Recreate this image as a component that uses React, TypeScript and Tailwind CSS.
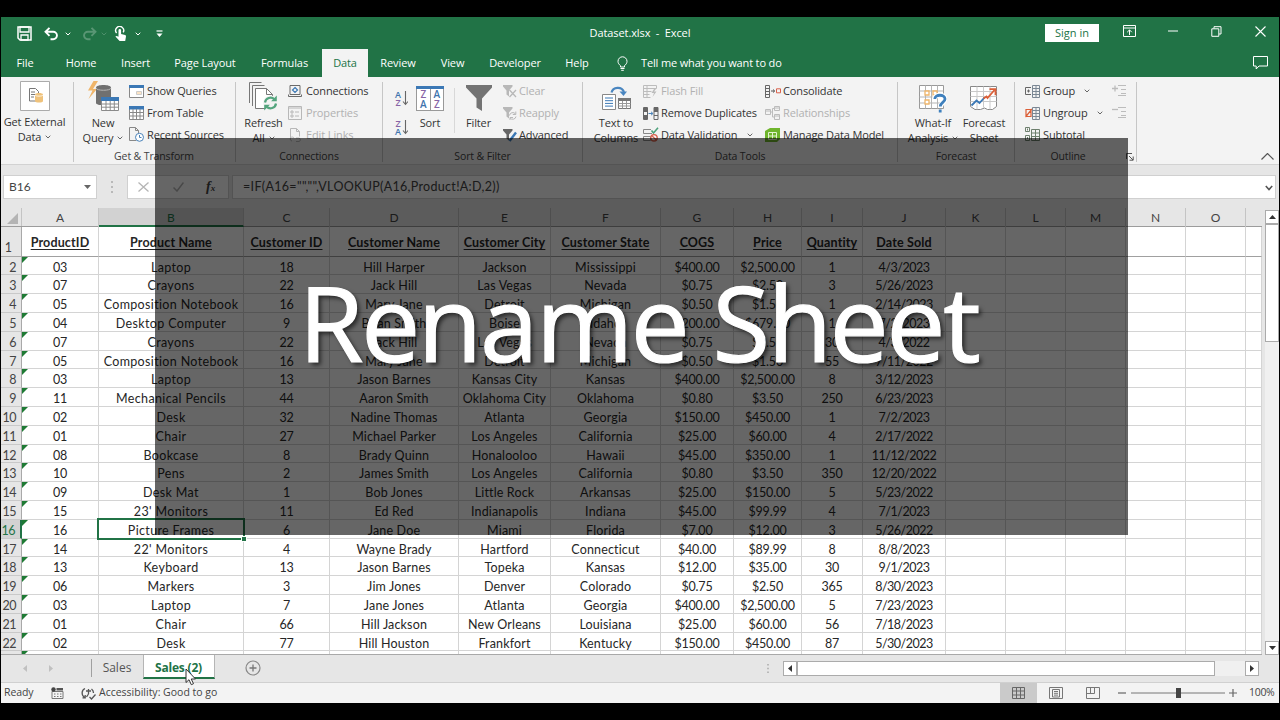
import type { ReactNode } from "react"
import clsx from "clsx"

const COLUMNS = ["A", "B", "C", "D", "E", "F", "G", "H", "I", "J", "K", "L", "M", "N", "O", ""]

const HEADERS = [
  "ProductID",
  "Product Name",
  "Customer ID",
  "Customer Name",
  "Customer City",
  "Customer State",
  "COGS",
  "Price",
  "Quantity",
  "Date Sold",
]

const ROWS = [
  ["03", "Laptop", "18", "Hill Harper", "Jackson", "Mississippi", "$400.00", "$2,500.00", "1", "4/3/2023"],
  ["07", "Crayons", "22", "Jack Hill", "Las Vegas", "Nevada", "$0.75", "$2.50", "3", "5/26/2023"],
  ["05", "Composition Notebook", "16", "Mary Jane", "Detroit", "Michigan", "$0.50", "$1.50", "1", "2/14/2023"],
  ["04", "Desktop Computer", "9", "Brian Smith", "Boise", "Idaho", "$200.00", "$679.00", "1", "7/2/2023"],
  ["07", "Crayons", "22", "Jack Hill", "Las Vegas", "Nevada", "$0.75", "$2.50", "30", "4/3/2022"],
  ["05", "Composition Notebook", "16", "Mary Jane", "Detroit", "Michigan", "$0.50", "$1.50", "55", "7/11/2022"],
  ["03", "Laptop", "13", "Jason Barnes", "Kansas City", "Kansas", "$400.00", "$2,500.00", "8", "3/12/2023"],
  ["11", "Mechanical Pencils", "44", "Aaron Smith", "Oklahoma City", "Oklahoma", "$0.80", "$3.50", "250", "6/23/2023"],
  ["02", "Desk", "32", "Nadine Thomas", "Atlanta", "Georgia", "$150.00", "$450.00", "1", "7/2/2023"],
  ["01", "Chair", "27", "Michael Parker", "Los Angeles", "California", "$25.00", "$60.00", "4", "2/17/2022"],
  ["08", "Bookcase", "8", "Brady Quinn", "Honalooloo", "Hawaii", "$45.00", "$350.00", "1", "11/12/2022"],
  ["10", "Pens", "2", "James Smith", "Los Angeles", "California", "$0.80", "$3.50", "350", "12/20/2022"],
  ["09", "Desk Mat", "1", "Bob Jones", "Little Rock", "Arkansas", "$25.00", "$150.00", "5", "5/23/2022"],
  ["15", "23' Monitors", "11", "Ed Red", "Indianapolis", "Indiana", "$45.00", "$99.99", "4", "7/1/2023"],
  ["16", "Picture Frames", "6", "Jane Doe", "Miami", "Florida", "$7.00", "$12.00", "3", "5/26/2022"],
  ["14", "22' Monitors", "4", "Wayne Brady", "Hartford", "Connecticut", "$40.00", "$89.99", "8", "8/8/2023"],
  ["13", "Keyboard", "13", "Jason Barnes", "Topeka", "Kansas", "$12.00", "$35.00", "30", "9/1/2023"],
  ["06", "Markers", "3", "Jim Jones", "Denver", "Colorado", "$0.75", "$2.50", "365", "8/30/2023"],
  ["03", "Laptop", "7", "Jane Jones", "Atlanta", "Georgia", "$400.00", "$2,500.00", "5", "7/23/2023"],
  ["01", "Chair", "66", "Hill Jackson", "New Orleans", "Louisiana", "$25.00", "$60.00", "56", "7/18/2023"],
  ["02", "Desk", "77", "Hill Houston", "Frankfort", "Kentucky", "$150.00", "$450.00", "87", "5/30/2023"],
]

const GRID =
  "grid grid-rows-[100%] grid-cols-[21px_77px_145px_86px_129px_92px_110px_73px_68px_61px_83px_60px_60px_60px_60px_60px_16px]"

const TABS = [
  { name: "File", width: "w-[48px]" },
  { name: "Home", width: "w-[64px]" },
  { name: "Insert", width: "w-[45px]" },
  { name: "Page Layout", width: "w-[94px]" },
  { name: "Formulas", width: "w-[65px] mr-[5px]" },
  { name: "Data", width: "w-[46px]", active: true },
  { name: "Review", width: "w-[60px]" },
  { name: "View", width: "w-[49px]" },
  { name: "Developer", width: "w-[76px]" },
  { name: "Help", width: "w-[48px]" },
]

type SvgProps = { w: number; h: number; className?: string; children: ReactNode }

function Svg({ w, h, className, children }: SvgProps) {
  return (
    <svg width={w} height={h} viewBox={`0 0 ${w} ${h}`} fill="none" className={clsx("shrink-0", className)}>
      {children}
    </svg>
  )
}

function Caret({ className }: { className?: string }) {
  return (
    <Svg w={6} h={4} className={className}>
      <path d="M0.7 0.7 3 3 5.3 0.7" stroke="currentColor" />
    </Svg>
  )
}

/* ---------- title bar ---------- */

function TitleBar() {
  return (
    <div className="flex h-8 items-center text-white">
      <div className="flex w-[481px] items-center pt-px pl-[16px]">
        <Svg w={15} h={15}>
          <path d="M1 1h13v13H3L1 12z" stroke="#fff" strokeWidth="1.5" />
          <path d="M3 1h9v5H3zM4 9h7v5H4z" stroke="#fff" strokeWidth="1.3" />
        </Svg>
        <Svg w={15} h={14} className="ml-[12px]">
          <path d="M5.5 0.8 1.5 4.8l4 4M1.8 4.8h7.4a3.7 3.7 0 0 1 0 7.5H6.5" stroke="#fff" strokeWidth="1.9" />
        </Svg>
        <Caret className="ml-[6px]" />
        <Svg w={15} h={14} className="ml-[11px] opacity-25">
          <path d="M9.5 0.8l4 4-4 4M13.2 4.8H5.8a3.7 3.7 0 0 0 0 7.5h2.7" stroke="#fff" strokeWidth="1.9" />
        </Svg>
        <Caret className="ml-[4px] opacity-20" />
        <Svg w={13} h={16} className="ml-[7px]">
          <path d="M2.6 7a4 4 0 1 1 6.6-.6" stroke="#fff" strokeWidth="1.4" />
          <path d="M4.5 4.2a1.3 1.3 0 0 1 2.6 0V8l4 1c.7.2 1 .7.9 1.4l-.8 4.6H5.6L1.4 10.6c.5-.9 1.7-.9 3.1.2z" fill="#fff" />
        </Svg>
        <Caret className="ml-[8px]" />
        <Svg w={7} h={8} className="ml-[15px]">
          <path d="M0.5 1h6" stroke="#fff" strokeWidth="1.2" />
          <path d="M0.5 3.5h6L3.5 7z" fill="#fff" />
        </Svg>
      </div>
      <div className="w-[316px] pt-px text-center text-[11px] tracking-[-0.1px] whitespace-pre">Dataset.xlsx  -  Excel</div>
      <div className="ml-[247px] flex h-[18px] w-[54px] items-center justify-center bg-white text-[11px] text-[#217346]">
        Sign in
      </div>
      <div className="ml-[24px] flex items-center pb-1">
        <Svg w={13} h={12}>
          <path d="M0.5 0.5h12v11H0.5zM0.5 3h12" stroke="#fff" />
          <path d="M6.5 10V5M4.2 7.2 6.5 4.9l2.3 2.3" stroke="#fff" />
        </Svg>
        <Svg w={10} h={2} className="ml-[32px]">
          <path d="M0 1h10" stroke="#fff" />
        </Svg>
        <Svg w={11} h={11} className="ml-[33px]">
          <path d="M0.8 2.8h7v7.5h-7z M3 2.5V0.7h7v7.3H8" stroke="#fff" />
        </Svg>
        <Svg w={11} h={11} className="ml-[33px]">
          <path d="M0.5 0.5l10 10M10.5 0.5l-10 10" stroke="#fff" strokeWidth="1.1" />
        </Svg>
      </div>
    </div>
  )
}

function RibbonTabs() {
  return (
    <div className="flex h-[28px] items-center text-[11px] tracking-[-0.1px] text-white">
      {TABS.map((tab) => (
        <div
          key={tab.name}
          className={clsx(
            "flex h-full items-center justify-center whitespace-nowrap",
            tab.width,
            tab.active && "bg-[#f3f3f3] text-[#217346]",
          )}
        >
          {tab.name}
        </div>
      ))}
      <Svg w={11} h={15} className="ml-[16px]">
        <path
          d="M3.5 11V9.6C2 8.6 1 7.1 1 5.3a4.5 4.5 0 0 1 9 0c0 1.8-1 3.3-2.5 4.3V11zM3.5 12.5h4M4.2 14.3h2.6"
          stroke="#fff"
        />
      </Svg>
      <span className="ml-[13px] tracking-[-0.15px] whitespace-nowrap">Tell me what you want to do</span>
      <Svg w={15} h={14} className="mr-[11px] ml-auto">
        <path d="M0.5 0.5h14v9.5H6L3.2 13V10H0.5z" stroke="#fff" />
      </Svg>
    </div>
  )
}

/* ---------- ribbon ---------- */

type GroupProps = { label: string; className: string; launcher?: boolean; labelClass?: string; children?: ReactNode }

function Group({ label, className, launcher, labelClass, children }: GroupProps) {
  return (
    <div className={clsx("flex shrink-0", className)}>
      <div className="flex min-w-0 flex-1 flex-col">
        <div className="flex h-[72px]">{children}</div>
        <div className={clsx("flex h-[14px] items-center justify-center text-[10.5px] text-[#444]", labelClass)}>
          <span>{label}</span>
          {launcher && (
            <Svg w={8} h={8} className="-mr-[48px] ml-[40px]">
              <path d="M0.5 6V0.5H6M3 3l4 4M7.2 3.5v3.7H3.5" stroke="#555" />
            </Svg>
          )}
        </div>
      </div>
      <div className="mt-[4px] h-[80px] w-px bg-[#c6c6c6]" />
    </div>
  )
}

type BigProps = { icon: ReactNode; lines: string[]; caret?: boolean; className: string }

function BigButton({ icon, lines, caret, className }: BigProps) {
  return (
    <div className={clsx("flex shrink-0 flex-col items-center whitespace-nowrap", className)}>
      <div className="flex h-[37px] items-center">{icon}</div>
      {lines.map((line, i) => (
        <div key={line} className="flex h-[15px] items-center leading-[15px]">
          {line}
          {caret && i === lines.length - 1 && <Caret className="ml-[4px] text-[#666]" />}
        </div>
      ))}
    </div>
  )
}

type SmallProps = { icon: ReactNode; label: string; disabled?: boolean; caret?: string }

function SmallButton({ icon, label, disabled, caret }: SmallProps) {
  return (
    <div className={clsx("flex h-[21.7px] items-center whitespace-nowrap", disabled && "text-[#b1b1b1]")}>
      <span className="flex w-[18px] shrink-0 items-center">{icon}</span>
      {label}
      {caret && <Caret className={clsx("text-[#666]", caret)} />}
    </div>
  )
}

function ExternalDataIcon() {
  return (
    <Svg w={30} h={30}>
      <path d="M0.5 0.5h29v29h-29z" fill="#fff" stroke="#ababab" />
      <path d="M9.5 7.5h6l3 3V20h-9z" stroke="#777" />
      <path d="M11 11h4M11 13.5h4M11 16h3" stroke="#777" />
      <path d="M15 13.5c0-2 8-2 8 0v6.5c0 2-8 2-8 0z" fill="#efc27b" />
      <path d="M15 14c0 1.5 8 1.5 8 0" stroke="#fff" strokeWidth=".8" />
    </Svg>
  )
}

function NewQueryIcon() {
  return (
    <Svg w={31} h={32}>
      <path d="M5.5 0 0 9.5h4.5L0.5 18 9 8H5L10 0z" fill="#efb56a" />
      <path d="M8 6.5c0-3.5 15-3.5 15 0V22c0 3-15 3-15 0z" fill="#707070" />
      <path d="M8 7c0 3 15 3 15 0" stroke="#b5b5b5" />
      <path d="M13.5 16.5h17v13h-17z" fill="#fff" stroke="#8a8a8a" />
      <path d="M13 16h18v4H13z" fill="#3b78b5" />
      <path d="M13.5 23h17M13.5 26.2h17M18 20v9.5M22.2 20v9.5M26.3 20v9.5" stroke="#8a8a8a" />
    </Svg>
  )
}

function RefreshIcon() {
  return (
    <Svg w={29} h={29}>
      <path d="M0.5 21V0.5h12M3.5 24V3.5h12" stroke="#777" />
      <path d="M6.5 6.5h11l6 6v14h-17z" fill="#fff" stroke="#777" />
      <path d="M17.5 6.5v6h6" stroke="#777" />
      <circle cx="21.5" cy="21" r="7.5" fill="#f3f3f3" />
      <path d="M16 20.5a5.5 5.5 0 0 1 9.5-3M27 21.5a5.5 5.5 0 0 1-9.5 3" stroke="#54a57e" strokeWidth="2.2" />
      <path d="M27.8 13.5v5.7h-5.7zM15.2 28.5v-5.7h5.7z" fill="#54a57e" />
    </Svg>
  )
}

function WindowIcon() {
  return (
    <Svg w={15} h={13}>
      <path d="M0.5 0.5h14v12H0.5z" fill="#fff" stroke="#888" />
      <path d="M0 0h15v3H0z" fill="#3b78b5" />
      <path d="M7.5 6.5h5v3h-5z" fill="#fbe3c4" stroke="#ccc" />
    </Svg>
  )
}

function TableIcon() {
  return (
    <Svg w={15} h={14}>
      <path d="M0.5 0.5h14v13H0.5z" fill="#fff" stroke="#888" />
      <path d="M0 0h15v3.5H0z" fill="#3b78b5" />
      <path d="M0.5 6.5h14M0.5 10h14M4 3v10.5M7.5 3v10.5M11 3v10.5" stroke="#888" />
    </Svg>
  )
}

function RecentIcon() {
  return (
    <Svg w={15} h={15}>
      <path d="M7 13.5H0.5v-13h6l3 3V6M6.5 0.5v3h3" stroke="#888" />
      <circle cx="10.5" cy="10.3" r="4" fill="#fff" stroke="#4a82b8" />
      <path d="M10.5 8v2.5h2" stroke="#4a82b8" />
    </Svg>
  )
}

function ConnectionsIcon() {
  return (
    <Svg w={14} h={13}>
      <path d="M2 0.5h10v9H2zM0.5 9.5v2h13v-2" stroke="#6a6a6a" />
      <path d="M7 2.5 9.5 5 7 7.5 4.5 5z" stroke="#3b78b5" strokeWidth="1.2" />
    </Svg>
  )
}

function PropertiesIcon() {
  return (
    <Svg w={14} h={14}>
      <path d="M0.5 0.5h13v13H0.5zM0.5 2h13" stroke="#b8b8b8" />
      <path d="M3 5h2v2H3zM3 9h2v2H3zM7 6h4M7 10h4" stroke="#b8b8b8" />
    </Svg>
  )
}

function EditLinksIcon() {
  return (
    <Svg w={14} h={14}>
      <path d="M2.5 11.5v-11h6l3 3v5M8.5 0.5v3h3M4 13a2 2 0 1 1 2-3M8 10h3a1.8 1.8 0 0 1 0 3.5H8" stroke="#b8b8b8" />
    </Svg>
  )
}

/* letter pair with a down arrow, used by the two quick sort buttons */
function SortLetters({ top, bottom }: { top: string; bottom: string }) {
  return (
    <div className="flex h-[29px] items-center">
      <div className="flex w-[8px] flex-col text-center text-[9px] leading-[7.5px] font-semibold">
        <span className={top === "A" ? "text-[#3f74ad]" : "text-[#8764a6]"}>{top}</span>
        <span className={bottom === "A" ? "text-[#3f74ad]" : "text-[#8764a6]"}>{bottom}</span>
      </div>
      <Svg w={6} h={15}>
        <path d="M3.5 0v13M1 10.5l2.5 3 2.5-3" stroke="#666" strokeWidth="1.1" />
      </Svg>
    </div>
  )
}

function SortIcon() {
  return (
    <div className="mt-[4px] flex h-[25px] w-[28px] flex-col border border-[#999] bg-white">
      <div className="-mx-px -mt-px h-[3px] shrink-0 bg-[#3b78b5]" />
      <div className="flex flex-1 divide-x divide-[#999] text-center text-[10px] leading-[10px] font-semibold">
        <div className="flex flex-1 flex-col">
          <span className="text-[#8764a6]">Z</span>
          <span className="text-[#3f74ad]">A</span>
        </div>
        <div className="flex flex-1 flex-col">
          <span className="text-[#3f74ad]">A</span>
          <span className="text-[#8764a6]">Z</span>
        </div>
      </div>
    </div>
  )
}

function FilterIcon() {
  return (
    <Svg w={26} h={26} className="mt-[3px]">
      <path d="M0 0h26v2.5L16 13.5V26l-5.5-3.5v-9L0 2.5z" fill="#737373" />
    </Svg>
  )
}

function SmallFilterIcon({ color, kind }: { color: string; kind: "clear" | "reapply" | "advanced" }) {
  return (
    <Svg w={14} h={14}>
      <path d="M0 1h9.5v1.5L6 6.5v6l-2.5-2v-4L0 2.5z" fill={color} />
      {kind === "clear" && <path d="M6.5 6l6.5 7M13 6l-6.5 7" stroke={color} strokeWidth="1.3" />}
      {kind === "reapply" && (
        <path d="M6.5 9.5a3.3 3.3 0 0 1 6-1.5M12.8 5.5V8.5h-3M13 10.5a3.3 3.3 0 0 1-6 1.3M7 14v-2.5h3" stroke={color} />
      )}
      {kind === "advanced" && <path d="M6.5 13 13 4.5" stroke="#3b78b5" strokeWidth="2.4" />}
    </Svg>
  )
}

function TextToColumnsIcon() {
  return (
    <Svg w={29} h={25} className="mt-[3px]">
      <path d="M0.5 8.5h13v15H0.5z" fill="#fff" stroke="#888" />
      <path d="M3 12h8M3 14.7h8M3 17.4h8M3 20.1h8" stroke="#3b78b5" />
      <path d="M16.5 12.5h12v10h-12z" fill="#fff" stroke="#777" />
      <path d="M16 12h13v3H16z" fill="#777" />
      <path d="M16.5 17.5h12M16.5 20h12M20.5 15v7.5M24.5 15v7.5" stroke="#999" />
      <path d="M9.5 6.5C11 1 19.5 0 22 6" stroke="#4a86c0" strokeWidth="2.2" />
      <path d="M17.5 5.5h7.5L21.5 10z" fill="#4a86c0" />
    </Svg>
  )
}

function FlashFillIcon() {
  return (
    <Svg w={15} h={13}>
      <path d="M0.5 0.5h13v3M0.5 0.5v12h7M0.5 3.5h13M0.5 6.5h8M0.5 9.5h6M4 0.5v12" stroke="#bcbcbc" />
      <path d="M11 4 8.5 8H11l-1.5 4 4-5.5H11L13 4z" fill="#bcbcbc" />
    </Svg>
  )
}

function DuplicatesIcon() {
  return (
    <Svg w={16} h={13}>
      <path d="M0.5 0.5h4v12h-4zM11 0.5h4v12h-4zM0.5 4.5h4M0.5 8.5h4M11 4.5h4M11 8.5h4" stroke="#666" />
      <path d="M1 1h3.5v3.5H1zM11 1h4v3.5h-4zM1 9h3.5v3H1z" fill="#666" />
      <path d="M5.5 6.5h4M8 4.8l2 1.7-2 1.7" stroke="#4a82b8" />
    </Svg>
  )
}

function ValidationIcon() {
  return (
    <Svg w={16} h={15}>
      <path d="M8 2.5H0.5v4H9M0.5 9.5h7v4h-7z" stroke="#888" />
      <path d="M8.5 3.5l2 2.5L15 0.8" stroke="#4ea27c" strokeWidth="1.6" />
      <circle cx="11" cy="10.8" r="3.2" stroke="#d9614c" strokeWidth="1.4" />
      <path d="M8.8 8.6l4.4 4.4" stroke="#d9614c" strokeWidth="1.3" />
    </Svg>
  )
}

function ConsolidateIcon() {
  return (
    <Svg w={16} h={13}>
      <path d="M0.5 0.5h4v12h-4zM0.5 3.5h4M0.5 6.5h4M0.5 9.5h4" stroke="#666" />
      <path d="M6 6h3.5M8 4.5 9.7 6 8 7.5" stroke="#555" />
      <path d="M11.5 3.8h4v4h-4z" stroke="#d9614c" />
    </Svg>
  )
}

function RelationshipsIcon() {
  return (
    <Svg w={16} h={14}>
      <path d="M0.5 3.5h5v5h-5zM9.5 0.5h5v4h-5zM9.5 8.5h5v5h-5zM0.5 5h5M9.5 2h5M9.5 10h5M5.5 6h2V2.5h2M7.5 6v5h2" stroke="#bcbcbc" />
    </Svg>
  )
}

function DataModelIcon() {
  return (
    <Svg w={15} h={14}>
      <path d="M0 3 5 0h10v11l-3 3H0z" fill="#6fb52c" />
      <path d="M3.5 4.5h8v7h-8zM3.5 8h8M7.5 4.5v7" stroke="#e3f3d0" />
    </Svg>
  )
}

function WhatIfIcon() {
  return (
    <Svg w={28} h={28} className="mt-[5px]">
      <path d="M0.5 0.5h24v23H0.5z" fill="#fff" stroke="#999" />
      <path d="M0.5 6h24M0.5 12h24M0.5 18h24M6.5 0.5v23M12.5 0.5v23M18.5 0.5v23" stroke="#b5b5b5" />
      <path d="M6 6h4v4H6zM6 15h4v4H6zM14 6h4v4h-4z" stroke="#efb56a" strokeWidth="1.3" fill="#fff" />
      <path d="M15.5 14c0-5 10.5-5 10.5 0 0 3.5-4.5 3.5-4.5 8" stroke="#fff" strokeWidth="5" />
      <path d="M15.8 14c0-5 10.2-5 10.2 0 0 3.5-4.7 3.5-4.7 7.5M21.2 24.5v3" stroke="#3f80bd" strokeWidth="2.8" />
    </Svg>
  )
}

function ForecastIcon() {
  return (
    <Svg w={28} h={25} className="mt-[3px]">
      <path d="M0.5 0.5h26v20l-4 3h-5l-3-1.5-4 1.5H5l-4.5-3z" fill="#fff" stroke="#888" />
      <path d="M0.5 5.5h26M0.5 10.5h26M0.5 15.5h26M7 0.5v23M13.5 0.5v21M20 0.5v23" stroke="#c9c9c9" />
      <path d="M1.5 19.5l5-5 3 2.5 5-5.5" stroke="#3b78b5" strokeWidth="1.8" />
      <path d="M13.5 12.5l3-2 1 1.5 7-8" stroke="#dc5f38" strokeWidth="1.8" />
      <path d="M19.5 3.2h6v6" stroke="#dc5f38" strokeWidth="1.8" />
    </Svg>
  )
}

function OutlineIcon({ color }: { color: string }) {
  return (
    <Svg w={15} h={13}>
      <path d="M6 2.5H0.5v7H6M2 6h3M3.5 4.5v3" stroke={color} />
      <path d="M7.5 0.5h7v12h-7zM7.5 3.5h7M7.5 6.5h7M7.5 9.5h7M11 0.5v12" stroke="#7b8794" />
    </Svg>
  )
}

function UngroupIcon() {
  return (
    <Svg w={15} h={13}>
      <path d="M1 2.5h5v7H1zM0.5 10 7 2" stroke="#dc5f38" strokeWidth="1.2" />
      <path d="M7.5 0.5h7v12h-7zM7.5 3.5h7M7.5 6.5h7M7.5 9.5h7M11 0.5v12" stroke="#7b8794" />
    </Svg>
  )
}

function SubtotalIcon() {
  return (
    <Svg w={15} h={15}>
      <path d="M0.5 0.5h4v4h-4zM0.5 8.5h4v5h-4zM6.5 2.5h8v11h-8zM6.5 6h8M6.5 9.5h8M10.5 2.5v11M2.5 1.5v2M2.5 10v2" stroke="#6d7f6d" />
    </Svg>
  )
}

function DetailIcon({ plus }: { plus?: boolean }) {
  return (
    <Svg w={14} h={12}>
      <path d="M6 1.5h8M9 5.5h5M9 9.5h5M6 11.5h8" stroke="#bcbcbc" />
      <path d={plus ? "M0 4.5h6M3 1.5v6" : "M0 3.5h6"} stroke="#bcbcbc" strokeWidth="1.3" />
    </Svg>
  )
}

function Ribbon() {
  return (
    <div className="flex h-[88px] border-b border-[#d2d2d2] bg-[#f3f3f3] pt-px text-[11px] tracking-[-0.12px] text-[#333]">
      <Group label="" className="w-[73px]">
        <BigButton className="-mt-px w-[67px]" icon={<ExternalDataIcon />} lines={["Get External", "Data"]} caret />
      </Group>

      <Group label="Get & Transform" className="w-[162px]" labelClass="pr-px">
        <BigButton className="ml-[3px] w-[52px]" icon={<NewQueryIcon />} lines={["New", "Query"]} caret />
        <div className="pt-[2.6px]">
          <SmallButton icon={<WindowIcon />} label="Show Queries" />
          <SmallButton icon={<TableIcon />} label="From Table" />
          <SmallButton icon={<RecentIcon />} label="Recent Sources" />
        </div>
      </Group>

      <Group label="Connections" className="w-[147px]">
        <BigButton className="ml-[3px] w-[49px]" icon={<RefreshIcon />} lines={["Refresh", "All"]} caret />
        <div className="pt-[2.6px]">
          <SmallButton icon={<ConnectionsIcon />} label="Connections" />
          <SmallButton icon={<PropertiesIcon />} label="Properties" disabled />
          <SmallButton icon={<EditLinksIcon />} label="Edit Links" disabled />
        </div>
      </Group>

      <Group label="Sort & Filter" className="w-[200px]">
        <div className="ml-[11px] w-[16px] pt-[6px]">
          <SortLetters top="A" bottom="Z" />
          <SortLetters top="Z" bottom="A" />
        </div>
        <BigButton className="ml-px w-[38px]" icon={<SortIcon />} lines={["Sort"]} />
        <div className="mt-[10px] ml-[5px] h-[45px] w-px bg-[#d8d8d8]" />
        <BigButton className="mr-px w-[47px]" icon={<FilterIcon />} lines={["Filter"]} />
        <div className="pt-[2.6px] [&_span]:w-[16px]">
          <SmallButton icon={<SmallFilterIcon color="#b8b8b8" kind="clear" />} label="Clear" disabled />
          <SmallButton icon={<SmallFilterIcon color="#b8b8b8" kind="reapply" />} label="Reapply" disabled />
          <SmallButton icon={<SmallFilterIcon color="#666" kind="advanced" />} label="Advanced" />
        </div>
      </Group>

      <Group label="Data Tools" className="w-[315px]">
        <BigButton className="ml-[6px] w-[54px]" icon={<TextToColumnsIcon />} lines={["Text to", "Columns"]} />
        <div className="w-[122px] pt-[2.6px]">
          <SmallButton icon={<FlashFillIcon />} label="Flash Fill" disabled />
          <SmallButton icon={<DuplicatesIcon />} label="Remove Duplicates" />
          <SmallButton icon={<ValidationIcon />} label="Data Validation" caret="ml-[10px]" />
        </div>
        <div className="pt-[2.6px]">
          <SmallButton icon={<ConsolidateIcon />} label="Consolidate" />
          <SmallButton icon={<RelationshipsIcon />} label="Relationships" disabled />
          <SmallButton icon={<DataModelIcon />} label="Manage Data Model" />
        </div>
      </Group>

      <Group label="Forecast" className="w-[117px]">
        <BigButton className="ml-[8px] w-[54px]" icon={<WhatIfIcon />} lines={["What-If", "Analysis"]} caret />
        <BigButton className="ml-px w-[46px]" icon={<ForecastIcon />} lines={["Forecast", "Sheet"]} />
      </Group>

      <Group label="Outline" className="w-[122px]" labelClass="pr-[15px]" launcher>
        <div className="ml-[10px] w-[87px] pt-[2.6px]">
          <SmallButton icon={<OutlineIcon color="#666" />} label="Group" caret="ml-[9px]" />
          <SmallButton icon={<UngroupIcon />} label="Ungroup" caret="ml-[9px]" />
          <SmallButton icon={<SubtotalIcon />} label="Subtotal" />
        </div>
        <div className="flex flex-col gap-[10px] pt-[6px]">
          <DetailIcon plus />
          <DetailIcon />
        </div>
      </Group>

      <div className="flex flex-1 items-end justify-end pr-[5px] pb-[4px]">
        <Svg w={13} h={7}>
          <path d="M0.5 6.5l6-6 6 6" stroke="#555" strokeWidth="1.2" />
        </Svg>
      </div>
    </div>
  )
}

/* ---------- formula bar ---------- */

function FormulaBar() {
  return (
    <div className="flex h-[43px] items-start bg-[#e6e6e6] pt-[10px] text-[#444]">
      <div className="ml-[2px] flex h-[24px] w-[94px] items-center justify-between border border-[#d0d0d0] bg-white pr-[5px] pl-[5px] font-['Lato'] text-[12px]">
        B16
        <Svg w={7} h={4}>
          <path d="M0 0h7L3.5 4z" fill="#666" />
        </Svg>
      </div>
      <Svg w={2} h={12} className="mt-[6px] ml-[14px]">
        <path d="M1 0v2M1 5v2M1 10v2" stroke="#aaa" strokeWidth="1.5" />
      </Svg>
      <div className="ml-[14px] flex h-[24px] w-[102px] items-center border border-[#d0d0d0] bg-white pl-[10px]">
        <Svg w={11} h={10}>
          <path d="M0.5 0.5l10 9M10.5 0.5l-10 9" stroke="#b5b5b5" strokeWidth="1.3" />
        </Svg>
        <Svg w={11} h={10} className="ml-[24px]">
          <path d="M0.5 5.5l3.5 3.5 6.5-8.5" stroke="#b5b5b5" strokeWidth="1.5" />
        </Svg>
        <span className="ml-[22px] font-['Liberation_Serif'] text-[14px] leading-none font-bold italic">
          f<span className="text-[9px]">x</span>
        </span>
      </div>
      <div className="ml-[3px] flex h-[24px] w-[1044px] items-center justify-between border border-[#d0d0d0] bg-white pt-px pr-[2px] pl-[10px] font-['Lato'] text-[12.5px] tracking-[0.32px]">
        {'=IF(A16="","",VLOOKUP(A16,Product!A:D,2))'}
        <Svg w={8} h={6}>
          <path d="M0.8 1 4 4.5 7.2 1" stroke="#555" strokeWidth="1.6" />
        </Svg>
      </div>
    </div>
  )
}

/* ---------- sheet ---------- */

function ColumnHeads() {
  return (
    <div className={clsx(GRID, "h-[19px] shrink-0 border-b border-[#9c9c9c] bg-[#e6e6e6] leading-[19px] text-[#444]")}>
      <div className="flex items-end justify-end border-r border-[#c4c4c4] pr-[3px] pb-[2px]">
        <Svg w={11} h={11}>
          <path d="M11 0v11H0z" fill="#b4b4b4" />
        </Svg>
      </div>
      {COLUMNS.map((col, i) => (
        <div
          key={i}
          className={clsx(
            "h-[19px] text-center text-[12px]",
            i < 15 && "border-r border-[#c4c4c4]",
            col === "B" && "border-b-2 border-b-[#217346] bg-[#d2d2d2] text-[#217346]",
          )}
        >
          {col}
        </div>
      ))}
    </div>
  )
}

// names run a little wide, money and dates a little tight
function cellText(i: number) {
  if (i === 9) return "tracking-[-0.5px]"
  if (i === 0 || i === 2 || i > 5) return "tracking-[-0.2px]"
  if (i === 1) return "tracking-[0.35px]"
  return "tracking-[0.15px]"
}

function SheetRow({ number, cells }: { number: number; cells: string[] }) {
  const selected = number === 16
  return (
    <div className={clsx(GRID, "h-[18.8px] shrink-0 leading-[21.5px]")}>
      <div
        className={clsx(
          "border-r border-b border-b-[#c9c9c9] pr-[5px] text-right tracking-[-0.5px]",
          selected ? "border-r-2 border-r-[#217346] bg-[#d2d2d2] text-[#217346]" : "border-r-[#a9a9a9] bg-[#e6e6e6] text-[#444]",
        )}
      >
        {number < 23 && number}
      </div>
      {COLUMNS.map((col, i) => (
        <div
          key={i}
          className={clsx("relative border-r border-b border-[#d4d4d4] text-center whitespace-nowrap", cellText(i))}
        >
          {i === 0 && (
            <Svg w={6} h={6} className="absolute top-0 left-0">
              <path d="M0 0h6L0 6z" fill="#1e7a34" />
            </Svg>
          )}
          {cells[i]}
          {selected && col === "B" && (
            <div className="absolute -top-[2px] -right-[2px] -bottom-[2px] -left-[2px] z-10 border-2 border-[#217346]">
              <div className="absolute -right-[4px] -bottom-[4px] h-[6px] w-[6px] border border-white bg-[#217346]" />
            </div>
          )}
        </div>
      ))}
    </div>
  )
}

function Sheet() {
  return (
    <div className="flex h-[447px] bg-[#e6e6e6]">
      <div className="flex h-[447px] w-[1261px] flex-col overflow-hidden border-b border-[#a9a9a9] bg-white font-['Lato'] text-[12.5px] text-[#262626]">
        <ColumnHeads />
        <div className={clsx(GRID, "h-[29.7px] shrink-0")}>
          <div className="border-r border-b border-[#a9a9a9] bg-[#e6e6e6] pt-[12px] pr-[9px] text-right leading-[18px] text-[#444]">
            1
          </div>
          {COLUMNS.map((_, i) => (
            <div
              key={i}
              className="border-r border-b border-r-[#d4d4d4] border-b-[#a0a0a0] text-center leading-[31px] font-bold tracking-[0.15px] whitespace-nowrap underline underline-offset-2"
            >
              {HEADERS[i]}
            </div>
          ))}
        </div>
        {ROWS.map((cells, i) => (
          <SheetRow key={i} number={i + 2} cells={cells} />
        ))}
        <SheetRow number={23} cells={[]} />
      </div>
      <div className="ml-[3px] flex w-[14px] flex-col pt-[2px]">
        <div className="flex h-[14px] items-center justify-center border border-[#ababab] bg-white">
          <Svg w={7} h={4}>
            <path d="M0 4h7L3.5 0z" fill="#333" />
          </Svg>
        </div>
        <div className="h-[118px] border border-[#ababab] bg-white" />
        <div className="flex-1 bg-[#f0f0f0]" />
        <div className="flex h-[14px] items-center justify-center border border-[#ababab] bg-white">
          <Svg w={7} h={4}>
            <path d="M0 0h7L3.5 4z" fill="#333" />
          </Svg>
        </div>
      </div>
    </div>
  )
}

/* ---------- bottom bars ---------- */

function SheetTabs() {
  return (
    <div className="flex h-[27px] items-start bg-[#e6e6e6] text-[12px]">
      <Svg w={4} h={7} className="mt-[10px] ml-[22px]">
        <path d="M4 0v7L0 3.5z" fill="#c0c0c0" />
      </Svg>
      <Svg w={4} h={7} className="mt-[10px] ml-[22px]">
        <path d="M0 0v7l4-3.5z" fill="#c0c0c0" />
      </Svg>
      <div className="mt-[4px] ml-[38px] h-[18px] w-px bg-[#a0a0a0]" />
      <div className="flex h-[25px] w-[51px] items-center justify-center pr-px text-[#555]">Sales</div>
      <div className="flex h-[24px] w-[72px] items-center justify-center border-x border-b-2 border-x-[#b5b5b5] border-b-[#217346] bg-white pt-[3px] pr-px font-bold tracking-[-0.2px] text-[#217346]">
        Sales (2)
      </div>
      <Svg w={16} h={16} className="mt-[5px] ml-[30px]">
        <circle cx="8" cy="8" r="7" stroke="#888" strokeWidth="1.2" />
        <path d="M8 4.5v7M4.5 8h7" stroke="#777" strokeWidth="1.3" />
      </Svg>
      <Svg w={2} h={9} className="mt-[9px] ml-auto">
        <path d="M1 0v1.5M1 3.7v1.5M1 7.4v1.5" stroke="#aaa" strokeWidth="1.5" />
      </Svg>
      <div className="mt-[6px] mr-[20px] ml-[14px] flex h-[15px] w-[476px] bg-[#f0f0f0]">
        <div className="flex w-[14px] items-center justify-center border border-[#ababab] bg-white">
          <Svg w={4} h={7}>
            <path d="M4 0v7L0 3.5z" fill="#333" />
          </Svg>
        </div>
        <div className="w-[418px] border border-[#ababab] bg-white" />
        <div className="ml-auto flex w-[14px] items-center justify-center border border-[#ababab] bg-white">
          <Svg w={4} h={7}>
            <path d="M0 0v7l4-3.5z" fill="#333" />
          </Svg>
        </div>
      </div>
    </div>
  )
}

function StatusBar() {
  return (
    <div className="flex h-[21px] items-center border-t border-[#d0d0d0] bg-[#f3f3f3] text-[10.5px] text-[#444]">
      <span className="ml-[3px] w-[47px] tracking-[-0.1px]">Ready</span>
      <Svg w={13} h={12}>
        <path d="M1 4.5h11v7H1zM3 7h1.5M6 7h1.5M9 7h1.5M3 9.5h1.5M6 9.5h1.5M9 9.5h1.5" stroke="#777" />
        <circle cx="2.5" cy="2.5" r="2.2" fill="#444" />
        <path d="M5.5 1h6.5v2.5H5.5z" fill="#555" />
      </Svg>
      <Svg w={15} h={13} className="ml-[17px]">
        <path d="M4 1.5C0.5 3 0 8 3.5 10.5M1.5 10.8h2.7V8M7.5 2v5M5 4h5M7.5 7l-2 3M8.5 10l2 2 4-4.5M12.5 6a5 5 0 0 0-2-4" stroke="#555" strokeWidth="1.3" />
      </Svg>
      <span className="ml-[3px]">Accessibility: Good to go</span>
      <div className="ml-auto flex h-full w-[37px] items-center justify-center bg-[#cacaca]">
        <Svg w={13} h={12}>
          <path d="M0.5 0.5h12v11H0.5zM0.5 4h12M0.5 8h12M4.5 0.5v11M8.5 0.5v11" stroke="#666" />
        </Svg>
      </div>
      <Svg w={14} h={12} className="ml-[12px]">
        <path d="M0.5 0.5h13v11H0.5zM3.5 2.5h7v7.5h-7zM5 4.5h4M5 6.3h4M5 8.1h4" stroke="#777" />
      </Svg>
      <Svg w={14} h={12} className="ml-[23px]">
        <path d="M0.5 0.5h13v11H0.5zM4.5 0.5v6M8.5 0.5v6h-8" stroke="#777" />
      </Svg>
      <Svg w={8} h={2} className="ml-[18px]">
        <path d="M0 1h8" stroke="#666" strokeWidth="1.2" />
      </Svg>
      <Svg w={94} h={12} className="ml-[5px]">
        <path d="M0 6h94" stroke="#777" />
        <path d="M45 1h5v10h-5z" fill="#444" />
      </Svg>
      <Svg w={8} h={8} className="ml-[4px]">
        <path d="M0 4h8M4 0v8" stroke="#666" strokeWidth="1.2" />
      </Svg>
      <span className="mr-[4px] ml-[12px] w-[26px] tracking-[-0.3px] whitespace-nowrap">100%</span>
    </div>
  )
}

function TitleOverlay() {
  return (
    <div className="absolute top-[138px] left-[155px] z-20 flex h-[397px] w-[973px] items-center justify-center bg-black/60">
      <h1 className="-mt-[30px] mr-[6px] text-[105px] leading-none tracking-[-2.3px] whitespace-nowrap text-white [-webkit-text-stroke:1.2px_#fff] [text-shadow:3px_3px_4px_rgba(0,0,0,0.6)]">
        Rename Sheet
      </h1>
    </div>
  )
}

function Pointer() {
  return (
    <Svg w={12} h={18} className="absolute top-[668px] left-[185px] z-30">
      <path d="M1 1v13.5l3-2.8 2.3 5 2.2-1-2.3-4.7h4.3z" fill="#fff" stroke="#333" />
    </Svg>
  )
}

export default function App() {
  return (
    <div className="relative h-[720px] w-[1280px] overflow-hidden bg-black pt-[17px] pl-px font-['Open_Sans',sans-serif]">
      <div className="w-[1278px] overflow-hidden">
        <header className="bg-[#217346]">
          <TitleBar />
          <RibbonTabs />
        </header>
        <Ribbon />
        <FormulaBar />
        <Sheet />
        <SheetTabs />
        <StatusBar />
      </div>
      <TitleOverlay />
      <Pointer />
    </div>
  )
}
